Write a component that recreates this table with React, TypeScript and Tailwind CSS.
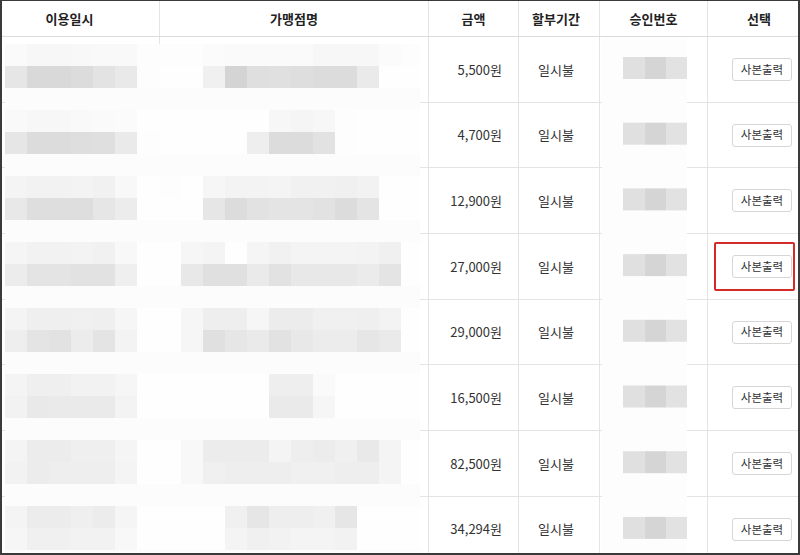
import React from 'react';

// 카드 이용내역 표 (앞 두 열과 승인번호는 모자이크 처리됨)
const amounts = ['5,500원', '4,700원', '12,900원', '27,000원', '29,000원', '16,500원', '82,500원', '34,294원'];

// 22px 모자이크 블록 (회색 값), y=44부터 한 줄씩
const mosaic = [
  'fa f7 f7 f8 f9 f9 fd fd fd fb fa fa fa fa f7 f7 f7 fb fd',
  'e6 d9 d9 dc e3 e9 fd fe fe f0 d4 df e0 de dc dc ea fe fe',
  '',
  'f9 f7 f7 f9 fa fb fe fe fe fe fe fe f7 f5 f7 fd fe fe fe',
  'e6 dc dc de df ea fd fe fe fe fe ee dc dc e2 fd fe fe fe',
  '',
  'f4 f2 f2 f3 f1 f8 fe fd fe f6 f3 f3 f4 f1 f1 f0 f2 fe fe',
  'e8 de de de e6 ec fe fe fe e6 dc e2 e4 e4 e2 dc e4 fe fe',
  '',
  'f5 f2 f2 f3 f1 f8 fe fe f6 f4 fe f5 f1 f4 f4 f4 f3 f0 fe',
  'ec e4 e4 e2 e2 ef fe fe e8 e0 e0 ea e2 e8 e8 e8 eb e4 fe',
  '',
  'f4 ef ef f0 ef f6 fe fe f6 ee ee f6 ec ec f0 f0 ef f3 fe',
  'ee e4 e2 ec e4 f3 fe fe f6 e0 e6 ea e2 e8 ec ec e6 ea fe',
  '',
  'f4 ef ef f2 f2 f6 fe fe fe fe fe fe ee ee fa fe fe fe fe',
  'f2 e9 ea ea ea f3 fe fe fe fe fe fe ea ea f6 fe fe fe fe',
  '',
  'f4 ec ec ef ef f5 fe fe f8 ec ec ec f4 ee ec f0 e9 f4 fe',
  'f2 ec ee ee ee f4 fe fe f8 f0 ee ee ee f0 f0 ee ee f4 fe',
  '',
  'f4 ec ec ef ec f5 fe fe fe fe f0 e6 ee ee f0 e6 fe fe fe',
  'f6 f0 f0 f2 f2 f8 fe fe fe fe f4 f0 f2 f4 f4 f2 fe fe fe',
];

const ROW_H = 65.7;

function MosaicLeft() {
  return (
    <svg className="absolute left-[3px] top-[43px]" width={415} height={509}>
      <rect width={415} height={509} fill="#fcfcfc" />
      {mosaic.map((line, r) =>
        line
          ? line.split(' ').map((v, c) => (
              <rect key={`${r}-${c}`} x={c * 22} y={r * 22} width={22} height={22} fill={`#${v}${v}${v}`} />
            ))
          : null
      )}
    </svg>
  );
}

function MosaicApproval() {
  const shades = ['#e0e0e0', '#d5d5d5', '#e2e2e2'];
  return (
    <svg className="absolute left-[600px] top-[36px]" width={85} height={516}>
      <rect width={85} height={516} fill="#fdfdfd" />
      {amounts.map((_, i) =>
        shades.map((s, j) => (
          <rect key={`${i}-${j}`} x={21 + j * 21.5} y={20 + i * ROW_H} width={21.5} height={22} fill={s} />
        ))
      )}
    </svg>
  );
}

export default function App() {
  return (
    <div className="relative w-[800px] h-[555px] overflow-hidden bg-white border-t border-l-2 border-r-2 border-b-2 border-[#3a3a3a] font-['Noto_Sans_CJK_KR',sans-serif] text-[#333]">
      {/* 헤더 */}
      <div className="flex h-[36px] border-b border-[#dcdcdc] text-[13px] font-bold text-[#222]">
        <div className="w-[158px] flex items-center justify-center pr-[22px] border-r border-[#e4e4e4]">이용일시</div>
        <div className="w-[269px] flex items-center justify-center border-r border-[#e4e4e4]">가맹점명</div>
        <div className="w-[90px] flex items-center justify-center border-r border-[#e4e4e4]">금액</div>
        <div className="w-[81px] flex items-center justify-center pr-[6px] border-r border-[#e4e4e4]">할부기간</div>
        <div className="w-[108px] flex items-center justify-center border-r border-[#e4e4e4]">승인번호</div>
        <div className="w-[90px] flex items-center justify-center pl-[12px]">선택</div>
      </div>

      {/* 내역 */}
      {amounts.map((amount, i) => (
        <div key={i} className="flex h-[65.7px] shrink-0 border-b border-[#e4e4e4] text-[13px]">
          <div className="w-[158px] border-r border-[#e4e4e4]" />
          <div className="w-[269px] border-r border-[#e4e4e4]" />
          <div className="w-[90px] flex items-center justify-end pr-[16px] border-r border-[#e4e4e4]">{amount}</div>
          <div className="w-[81px] flex items-center justify-center pr-[6px] border-r border-[#e4e4e4]">일시불</div>
          <div className="w-[108px] border-r border-[#e4e4e4]" />
          <div className="relative w-[90px] flex items-center pl-[24px]">
            <button className="w-[60px] h-[23px] flex items-center justify-center bg-white border border-[#d6d6d6] rounded-[3px] text-[11.5px] text-[#333]">
              사본출력
            </button>
            {i === 3 && (
              <div className="absolute left-[6px] top-[8px] w-[81px] h-[49px] border-2 border-[#d42a2a] rounded-[2px]" />
            )}
          </div>
        </div>
      ))}

      <MosaicLeft />
      <MosaicApproval />
    </div>
  );
}
